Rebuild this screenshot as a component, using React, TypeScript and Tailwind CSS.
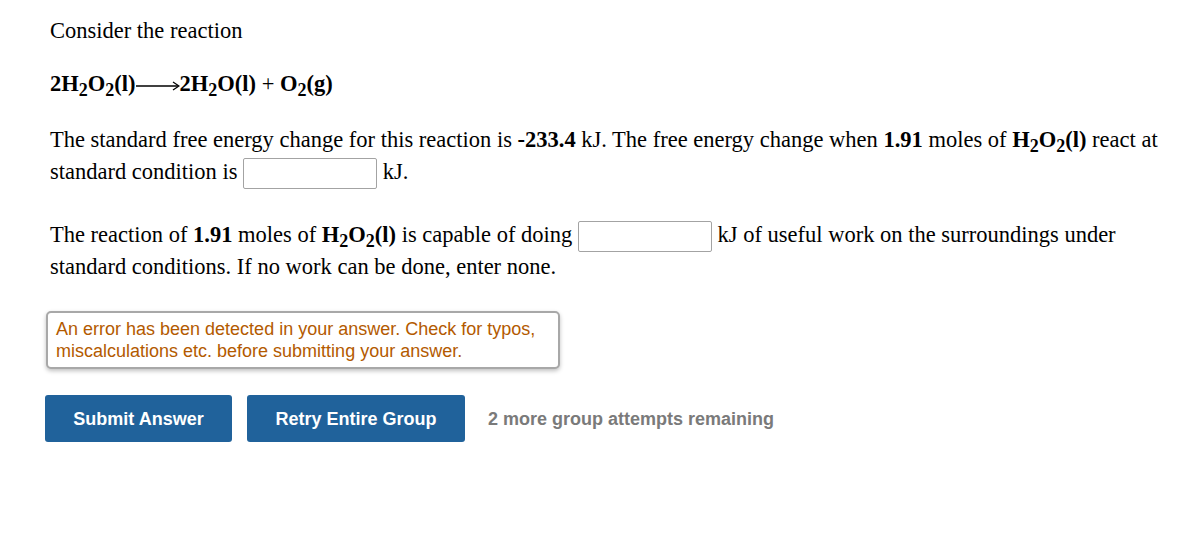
import React from "react";

function Sub({ children }: { children: React.ReactNode }) {
  return <sub className="text-[80%]">{children}</sub>;
}

function H2O2() {
  return (
    <b>
      H<Sub>2</Sub>O<Sub>2</Sub>(l)
    </b>
  );
}

function AnswerBox() {
  return (
    <input
      type="text"
      className="-my-[4px] h-[31px] w-[134px] border border-[#a3a3a3] bg-white align-middle rounded-[2px] outline-none"
    />
  );
}

export default function App() {
  return (
    <div className="min-h-[545px] bg-white pl-[50px] pt-[15px] text-[22.5px] leading-[32px] text-black [font-family:'Liberation_Serif','Times_New_Roman',serif]">
      <p>Consider the reaction</p>

      <p className="mt-[21px] font-bold">
        2H<Sub>2</Sub>O<Sub>2</Sub>(l)
        <svg width="44" height="12" viewBox="0 0 44 12" className="inline-block align-middle">
          <line x1="0" y1="6" x2="42" y2="6" stroke="#000" strokeWidth="1.3" />
          <path d="M37 2 L43 6 L37 10" fill="none" stroke="#000" strokeWidth="1.3" />
        </svg>
        2H<Sub>2</Sub>O(l) <span className="font-normal">+</span> O<Sub>2</Sub>(g)
      </p>

      <p className="mt-[24px] pr-[20px]">
        The standard free energy change for this reaction is <b>-233.4</b> kJ. The free energy change when <b>1.91</b> moles of <H2O2 /> react at standard condition is <AnswerBox /> kJ.
      </p>

      <p className="mt-[31px] pr-[60px]">
        The reaction of <b>1.91</b> moles of <H2O2 /> is capable of doing <AnswerBox /> kJ of useful work on the surroundings under standard conditions. If no work can be done, enter none.
      </p>

      <div className="mt-[28px] -ml-[4px] w-[514px] rounded-[5px] border-2 border-[#a8a8a8] bg-white px-[8px] py-[5px] text-[18px] leading-[22px] text-[#b35a00] shadow-[0_2px_4px_rgba(0,0,0,0.25)] [font-family:'Liberation_Sans',Arial,sans-serif]">
        An error has been detected in your answer. Check for typos, miscalculations etc. before submitting your answer.
      </div>

      <div className="mt-[26px] -ml-[5px] flex items-center gap-[15px] [font-family:'Liberation_Sans',Arial,sans-serif] text-[18px] font-bold">
        <button className="h-[47px] w-[187px] rounded-[3px] bg-[#20629b] text-white">Submit Answer</button>
        <button className="h-[47px] w-[218px] rounded-[3px] bg-[#20629b] text-white">Retry Entire Group</button>
        <span className="ml-[8px] text-[#7a7a7a]">2 more group attempts remaining</span>
      </div>
    </div>
  );
}
